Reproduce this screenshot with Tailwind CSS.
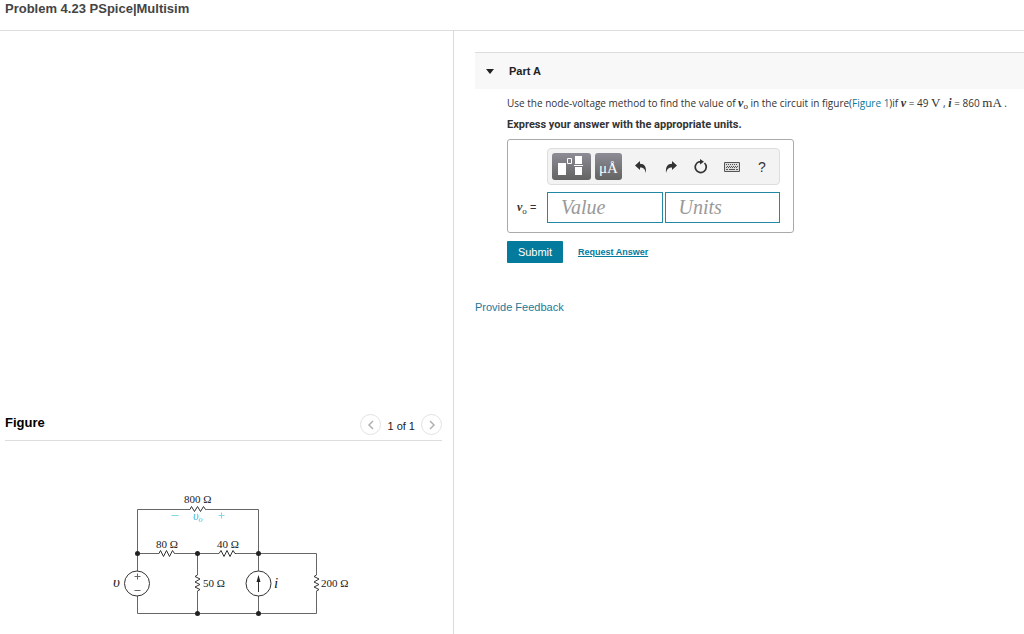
<!DOCTYPE html>
<html lang="en">
<head>
    <meta charset="utf-8">
    <title>Problem 4.23</title>
    <script src="https://cdn.jsdelivr.net/npm/@tailwindcss/browser@4"></script>
</head>
<body class="bg-white min-h-screen flex flex-col font-['Liberation_Sans',Arial,sans-serif] text-[11px] text-[#333]">
    <header class="h-[31px] shrink-0 border-b border-[#ddd] pl-[5px] pt-px">
        <h1 class="text-[13px] leading-4 font-bold text-[#444]">Problem 4.23 PSpice|Multisim</h1>
    </header>

    <main class="grow grid grid-cols-[minmax(0,454fr)_minmax(0,570fr)]">
        <!-- Figure pane -->
        <section class="flex flex-col justify-end border-r border-[#d3dce3] pl-[5px] pr-[11px]">
            <div class="flex items-center justify-between h-8 border-b border-[#ddd]">
                <h2 class="text-[13px] leading-4 font-bold text-black pb-1">Figure</h2>
                <div class="flex items-center text-[11px] text-[#222]">
                    <button aria-label="Previous figure" class="w-[21px] h-[21px] rounded-full border border-[#e2e2e2] flex items-center justify-center">
                        <svg class="w-2 h-2.5" viewBox="0 0 8 10" fill="none" stroke="#b0b0b0" stroke-width="1.5"><path d="M6 1 2 5l4 4"/></svg>
                    </button>
                    <span class="px-[6px] pt-0.5 leading-4">1 of 1</span>
                    <button aria-label="Next figure" class="w-[21px] h-[21px] rounded-full border border-[#e2e2e2] flex items-center justify-center">
                        <svg class="w-2 h-2.5" viewBox="0 0 8 10" fill="none" stroke="#b0b0b0" stroke-width="1.5"><path d="m2 1 4 4-4 4"/></svg>
                    </button>
                </div>
            </div>

            <div class="flex justify-center h-[193px] pt-11 pl-3">
                <svg class="w-[260px] h-[140px] font-['Liberation_Serif',serif]" viewBox="100 485 260 140" fill="none" stroke="#666" role="img" aria-label="Circuit diagram">
                    <!-- wires -->
                    <path d="M137.500 571V509.500H190M206.500 509.500H258.500V571M137.500 553.500H159M175.500 553.500H219M236 553.500H316.500V575M316.500 591V613.500H137.500V596M197.500 553.500V575M197.500 591V613.500M258.500 596V613.500"/>
                    <!-- resistors and sources -->
                    <g stroke="#333">
                        <path d="M190 509.500l1.500-3 3 5 3-5 3 5 3-5 2 3h1M159 553.500l1.500-3 3 6 3-6 3 6 3-6 2 3h1M219 553.500l2-3 3 6 3-6 3 6 3-6 2 3h1"/>
                        <path d="M316.500 575l-2.500 1.500 5 2.500-5 3 5 2.500-5 2.500 5 2.500-2.500 1.500M197.500 575l-2.500 1.500 5 2.500-5 3 5 2.500-5 2.500 5 2.500-2.500 1.500"/>
                        <circle cx="137" cy="583.500" r="12.500"/>
                        <circle cx="258.500" cy="583.500" r="12.500"/>
                        <path d="M258.500 592V580"/>
                    </g>
                    <path d="M134.500 576.500h6M137.500 573.500v6M134.500 590.500h6"/>
                    <g fill="#222" stroke="none">
                        <path d="m258.500 575 2 7h-4z"/>
                        <circle cx="137.500" cy="553.500" r="2.500"/>
                        <circle cx="197.500" cy="553.500" r="2.500"/>
                        <circle cx="258.500" cy="553.500" r="2.500"/>
                        <circle cx="197.500" cy="613.500" r="2.500"/>
                        <circle cx="258.500" cy="613.500" r="2.500"/>
                    </g>
                    <path stroke="#7fd9e8" d="M171.500 515.500h7M218.500 515.500h6M221.500 512.500v6"/>
                    <g fill="#222" stroke="none" font-size="11">
                        <text x="184" y="503">800 Ω</text>
                        <text x="156" y="548">80 Ω</text>
                        <text x="217" y="548">40 Ω</text>
                        <text x="203" y="587">50 Ω</text>
                        <text x="321" y="587">200 Ω</text>
                        <text x="113" y="587" font-size="15" font-style="italic">υ</text>
                        <text x="274" y="588" font-size="15" font-style="italic">i</text>
                        <text x="193" y="520" font-size="12" font-style="italic" fill="#35bdd8">υ<tspan font-size="8" dy="2">o</tspan></text>
                    </g>
                </svg>
            </div>
        </section>

        <!-- Question pane -->
        <section class="pl-[21px] pt-[21px]">
            <div class="flex items-center h-[37px] bg-[#f8f8f8] border-t border-[#ddd] pl-[11px]">
                <svg class="w-2 h-[5px]" viewBox="0 0 8 5" fill="#222"><path d="M0 0h8L4 5z"/></svg>
                <h2 class="pl-[15px] text-[11px] leading-4 font-bold text-[#222]">Part A</h2>
            </div>

            <div class="pl-8">
                <p class="h-5 mt-1 text-[10px] leading-5 whitespace-nowrap font-['Open_Sans',sans-serif]">Use the node-voltage method to find the value of <span class="font-['Liberation_Serif',serif] font-bold italic text-xs leading-none">v</span><sub class="font-['Liberation_Serif',serif] text-[9px]">o</sub> in the circuit in figure(<a href="#" class="text-[#047a9c]">Figure 1</a>)if <span class="font-['Liberation_Serif',serif] font-bold italic text-xs leading-none">v</span> = 49 <span class="font-['Liberation_Serif',serif] text-[13px] leading-none">V</span> , <span class="font-['Liberation_Serif',serif] font-bold italic text-xs leading-none">i</span> = 860 <span class="font-['Liberation_Serif',serif] text-[13px] leading-none">mA</span> .</p>
                <p class="mt-0.5 leading-5 font-bold font-[Roboto,sans-serif]">Express your answer with the appropriate units.</p>

                <div class="mt-1 w-[287px] h-[94px] border border-[#aaa] rounded-[3px] pt-2 pl-[9px] pr-[13px]">
                    <div class="ml-[30px] h-[37px] flex items-center rounded border border-[#ddd] bg-[#f3f3f3] pl-1 text-[#333]">
                        <button aria-label="Templates" class="w-[39px] h-[27px] rounded-[3px] bg-linear-to-b from-[#8e8c96] to-[#636363]">
                            <svg class="w-[39px] h-[27px]" viewBox="0 0 39 27" fill="#fff"><path d="M6 10h8v12H6zM23 3h7v8h-7zM22 12h9v1h-9zM23 14h7v8h-7z"/><path d="M15.500 5.500h4v5h-4z" fill="none" stroke="#fff"/></svg>
                        </button>
                        <button aria-label="Units" class="ml-1 w-[27px] h-[27px] rounded-[3px] bg-linear-to-b from-[#8e8c96] to-[#636363] text-white text-[15px] leading-6 pt-0.5 font-['Liberation_Serif',serif]">μÅ</button>
                        <button aria-label="Undo" class="ml-[13px] w-3 h-3">
                            <svg class="w-3 h-3" viewBox="0 0 12 12" fill="#333"><path d="M0 4.500 5 0v2.700c4.500 0 6.500 3 6 9.300C10 8 8.500 6.400 5 6.400V9z"/></svg>
                        </button>
                        <button aria-label="Redo" class="ml-[18px] w-3 h-3">
                            <svg class="w-3 h-3" viewBox="0 0 12 12" fill="#333"><path d="M12 4.500 7 0v2.700C2.500 2.700.5 5.700 1 12 2 8 3.500 6.400 7 6.400V9z"/></svg>
                        </button>
                        <button aria-label="Reset" class="ml-[17px] w-[14px] h-[15px]">
                            <svg class="w-[14px] h-[15px]" viewBox="0 0 14 15" fill="none" stroke="#333" stroke-width="1.700"><path d="M10.500 4a5.500 5.500 0 1 1-5.500-1.200L8 2.800"/><path d="M6 0 10 2.800 6 5.600z" fill="#333" stroke="none"/></svg>
                        </button>
                        <button aria-label="Keyboard" class="ml-4 w-4 h-[10px]">
                            <svg class="w-4 h-[10px]" viewBox="0 0 16 10" fill="#ddd" stroke="#555"><path d="M.5.5h15v9H.5z"/><path d="M2 2.500h12M3 4.500h11M2 5.500h12" stroke-dasharray="1 1"/><path d="M2 7.500h2M5 7.500h6M12 7.500h2"/></svg>
                        </button>
                        <button aria-label="Help" class="ml-[18px] text-sm leading-4">?</button>
                    </div>
                    <div class="mt-[7px] flex items-center">
                        <label for="value" class="w-[30px] whitespace-nowrap"><span class="font-['Liberation_Serif',serif] font-bold italic text-xs">v</span><sub class="font-['Liberation_Serif',serif] text-[9px]">o</sub> =</label>
                        <input id="value" type="text" placeholder="Value" class="min-w-0 flex-1 h-[31px] border border-[#2388a5] bg-white pl-[13px] font-['Liberation_Serif',serif] italic text-xl placeholder:text-[#999]">
                        <input aria-label="Units" type="text" placeholder="Units" class="ml-0.5 min-w-0 flex-1 h-[31px] border border-[#2388a5] bg-white pl-[13px] font-['Liberation_Serif',serif] italic text-xl placeholder:text-[#999]">
                    </div>
                </div>

                <div class="mt-2 flex items-center">
                    <button class="w-14 h-[22px] bg-[#047a9c] text-white text-[11px] leading-4 rounded-[1px]">Submit</button>
                    <a href="#" class="ml-[15px] text-[9px] leading-4 font-bold text-[#047a9c] underline">Request Answer</a>
                </div>
            </div>

            <a href="#" class="mt-9 block text-[11px] leading-4 text-[#1a7a9a]">Provide Feedback</a>
        </section>
    </main>
</body>
</html>
